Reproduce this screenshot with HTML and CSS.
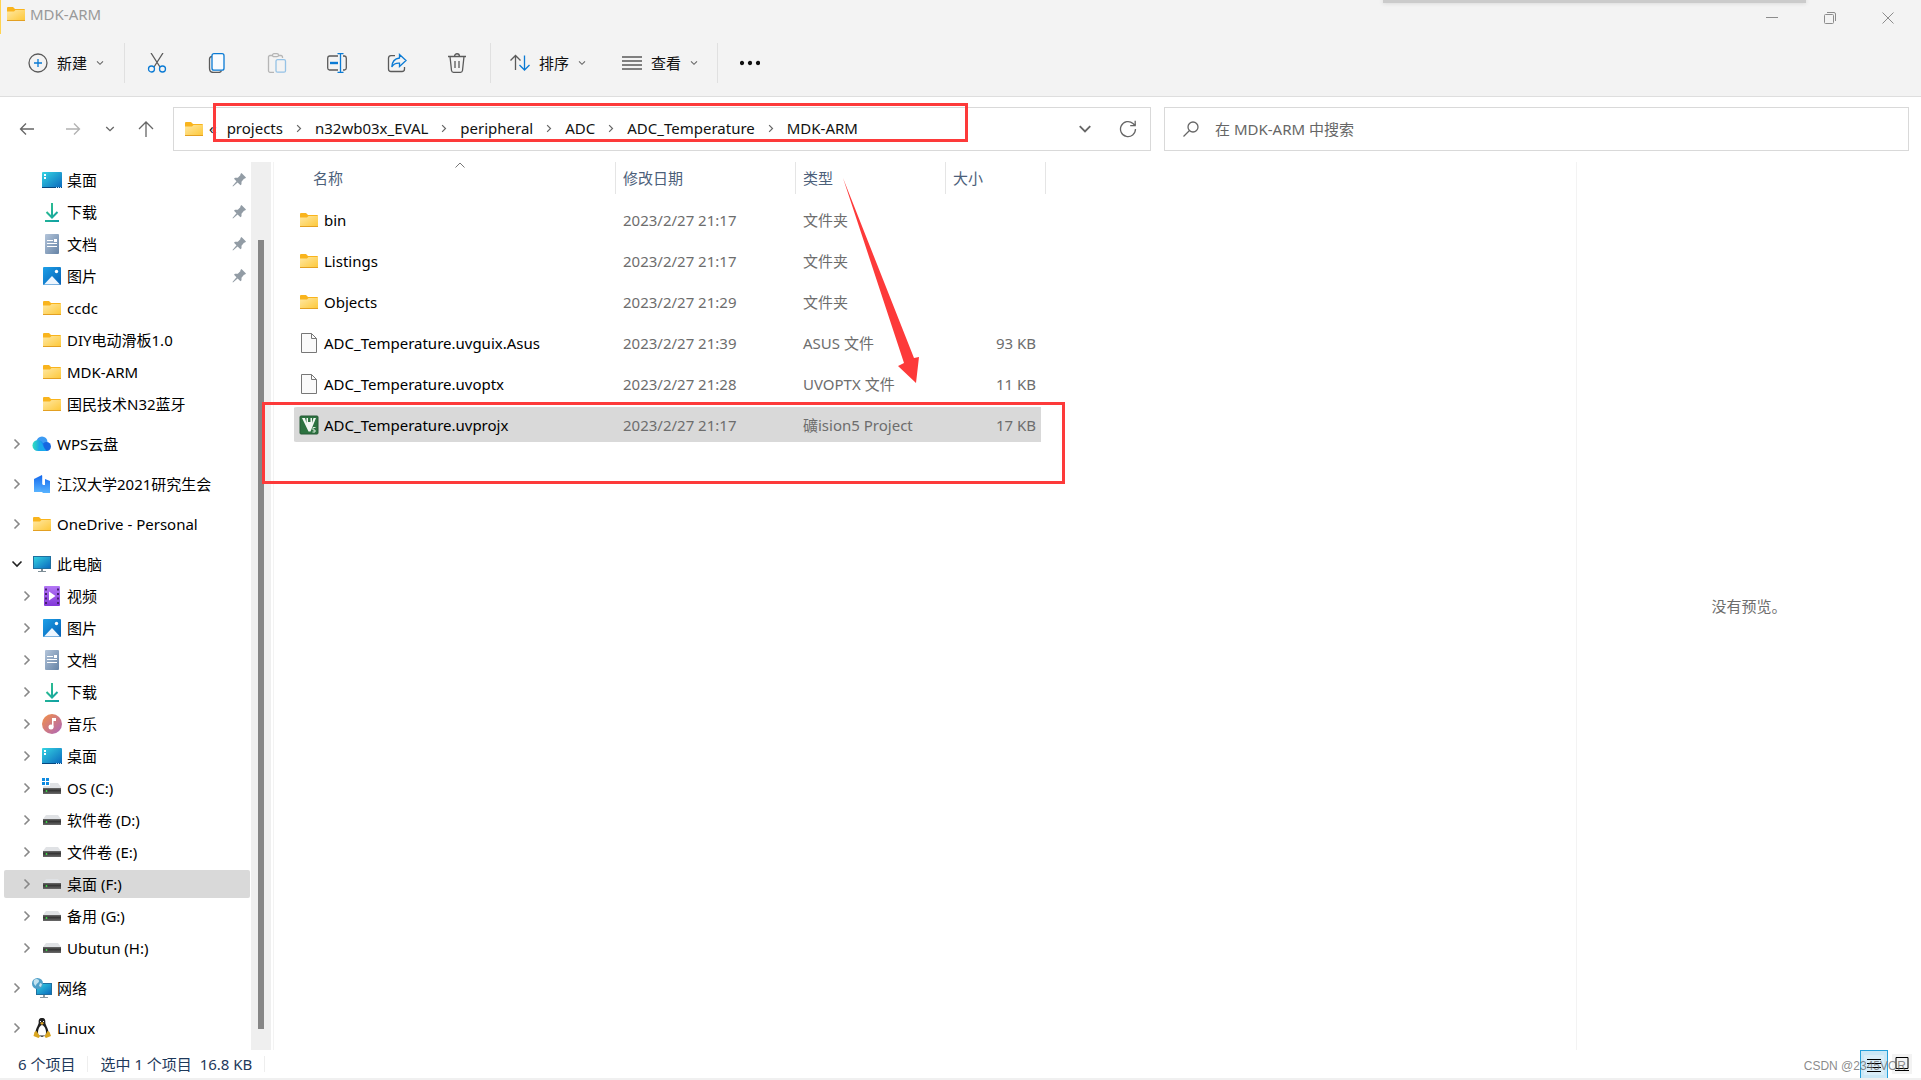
FILE: index.html
```html
<!DOCTYPE html>
<html lang="zh-CN">
  <head>
    <meta charset="UTF-8" />
    <meta name="viewport" content="width=device-width, initial-scale=1.0" />
    <title>MDK-ARM</title>
    <link rel="stylesheet" href="styles.css">
  </head>
  <body>
    <!-- shared icons -->
    <svg class="sprite" aria-hidden="true">
      <defs>
        <linearGradient id="gFolder" x1="0" y1="0" x2="1" y2="1"><stop offset="0" stop-color="#ffe8a3" /><stop offset="1" stop-color="#fdc736" /></linearGradient>
        <linearGradient id="gScreen" x1="0" y1="0" x2="1" y2="1"><stop offset="0" stop-color="#35d4e2" /><stop offset="1" stop-color="#0a67bd" /></linearGradient>
        <linearGradient id="gDown" x1="0" y1="0" x2="1" y2="1"><stop offset="0" stop-color="#35c58b" /><stop offset="1" stop-color="#0f9fa5" /></linearGradient>
        <linearGradient id="gDoc" x1="0" y1="0" x2="1" y2="1"><stop offset="0" stop-color="#b4c5da" /><stop offset="1" stop-color="#6583a6" /></linearGradient>
        <linearGradient id="gPic" x1="0" y1="0" x2="1" y2="1"><stop offset="0" stop-color="#1da0e8" /><stop offset="1" stop-color="#0560b5" /></linearGradient>
        <linearGradient id="gVideo" x1="0" y1="0" x2="0" y2="1"><stop offset="0" stop-color="#b376f5" /><stop offset="1" stop-color="#8237d8" /></linearGradient>
        <linearGradient id="gMusic" x1="0" y1="0" x2="1" y2="1"><stop offset="0" stop-color="#f49144" /><stop offset="1" stop-color="#ac64bd" /></linearGradient>
        <linearGradient id="gCloud" x1="0" y1="0" x2="1" y2="0"><stop offset="0" stop-color="#2fe0c0" /><stop offset="1" stop-color="#1487f5" /></linearGradient>
        <linearGradient id="gTower" x1="0" y1="0" x2="0" y2="1"><stop offset="0" stop-color="#1368ee" /><stop offset="1" stop-color="#58b3ff" /></linearGradient>
        <linearGradient id="gDrive" x1="0" y1="0" x2="0" y2="1"><stop offset="0" stop-color="#6b6b6b" /><stop offset="0.4" stop-color="#353535" /><stop offset="1" stop-color="#6b6b6b" /></linearGradient>
      </defs>
      <symbol id="folder" viewBox="0 0 20 20">
        <path d="M1 4a1 1 0 0 1 1-1h5l2 2h9a1 1 0 0 1 1 1v3H1z" fill="#f9b41d" />
        <path d="M1 7.500h7l1.500-1.500H19v11H1z" fill="url(#gFolder)" />
        <path d="M1 16.500h18" stroke="#e3a022" />
      </symbol>
      <symbol id="desktop" viewBox="0 0 20 20">
        <rect x="0" y="2" width="20" height="16" rx="1" fill="url(#gScreen)" />
        <path d="M0 17h20v1H0z" fill="#06477f" />
        <path d="M2 4h2v2H2zM2 7h2v2H2z" fill="#fff" />
        <path d="M14 17h1v1h-1zM16 17h1v1h-1zM18 17h1v1h-1z" fill="#bfe4ff" />
      </symbol>
      <symbol id="download" viewBox="0 0 20 20">
        <path d="M10 1v14M4.500 10l5.500 5.500L15.500 10M3 19h14" fill="none" stroke="url(#gDown)" stroke-width="2" />
      </symbol>
      <symbol id="document" viewBox="0 0 20 20">
        <rect x="3" y="0" width="14" height="20" rx="1" fill="url(#gDoc)" />
        <path d="M5 6.500h6M5 9.500h10M5 12.500h10" stroke="#fff" />
        <path d="M12 5h3v3h-3z" fill="#fff" />
      </symbol>
      <symbol id="picture" viewBox="0 0 20 20">
        <rect x="1" y="1" width="18" height="18" rx="1" fill="url(#gPic)" />
        <path d="M2 18.500l8-8.500 8 8.500z" fill="#edf6ff" />
        <circle cx="14.500" cy="5.500" r="1.700" fill="#fff" />
      </symbol>
      <symbol id="video" viewBox="0 0 20 20">
        <rect x="2" y="0" width="16" height="20" rx="1" fill="url(#gVideo)" />
        <path d="M4 2.500v16M16 2.500v16" stroke="#472070" stroke-width="2" stroke-dasharray="2 2.500" />
        <path d="M7 5.500l6.500 4.500L7 14.500z" fill="#fff" />
      </symbol>
      <symbol id="music" viewBox="0 0 20 20">
        <circle cx="10" cy="10" r="10" fill="url(#gMusic)" />
        <path d="M10 4h4v3h-2.500v6.500H10z" fill="#fff" />
        <circle cx="9" cy="13" r="2.500" fill="#fff" />
      </symbol>
      <symbol id="drive" viewBox="0 0 20 20">
        <path d="M4 5h12l3 4v2H1V9z" fill="#e0e2e5" />
        <rect x="1" y="9" width="18" height="6" fill="url(#gDrive)" />
        <circle cx="4.500" cy="12" r="0.900" fill="#3fe34a" />
      </symbol>
      <symbol id="windrive" viewBox="0 0 20 20">
        <path d="M4 5h12l3 4v2H1V9z" fill="#e0e2e5" />
        <rect x="1" y="10" width="18" height="6" fill="url(#gDrive)" />
        <circle cx="4.500" cy="13" r="0.900" fill="#3fe34a" />
        <path d="M-1-1h9v9h-9z" fill="#fff" />
        <path d="M0 0h3v3H0zM4 0h3v3H4zM0 4h3v3H0zM4 4h3v3H4z" fill="#0f8ae0" />
      </symbol>
      <symbol id="cloud" viewBox="0 0 20 20">
        <circle cx="10" cy="8" r="5.500" fill="#3c9bf3" />
        <circle cx="14.500" cy="12.500" r="4.500" fill="#1668e0" />
        <path d="M9 17h6V9z" fill="#1668e0" />
        <circle cx="6" cy="11.500" r="5.500" fill="url(#gCloud)" />
        <path d="M8 8c3 1 3 6 7 9H6z" fill="#19a9ec" />
      </symbol>
      <symbol id="tower" viewBox="0 0 20 20">
        <path d="M2 5l8-4v17H2z" fill="url(#gTower)" />
        <path d="M11 1.500v9.500h2V5l5 2v12h-7l-2-2V2z" fill="url(#gTower)" />
        <path d="M10.500 1v9.500M12 11v-9" stroke="#fff" stroke-width="0.800" />
      </symbol>
      <symbol id="pc" viewBox="0 0 20 20">
        <rect x="1.500" y="2.500" width="17" height="12" fill="url(#gScreen)" stroke="#1f6f9f" />
        <path d="M9 15h2v2H9zM6 17h8v1H6z" fill="#7d8d96" />
      </symbol>
      <symbol id="network" viewBox="0 0 20 20">
        <rect x="4.500" y="5.500" width="15" height="11" fill="url(#gScreen)" stroke="#1f6f9f" />
        <path d="M11 17h2v2h-2zM8 19h8v1H8z" fill="#8d9aa2" />
        <circle cx="5.500" cy="5.500" r="5.500" fill="#4f9fc8" />
        <path d="M2 2c2-2 5-1 5 1S4 5 4 8C2 7 1 5 2 2zM8 5l2 1-1 3-2-1z" fill="#c2e2ef" />
      </symbol>
      <symbol id="tux" viewBox="0 0 20 20">
        <path d="M10 0c-3 0-3.500 2-3.300 4.500C6.500 7.500 3 11 3.500 16L10 19l6.500-3C17 11 13.500 7.500 13.300 4.500 13.500 2 13 0 10 0z" fill="#202020" />
        <path d="M10 7c-3 1-5 6-3.500 10.500h7C15 13 13 8 10 7z" fill="#fff" />
        <path d="M8 5l2-1 2 1-2 2z" fill="#e0a520" />
        <path d="M8 3h1v1H8zM11 3h1v1h-1z" fill="#fff" />
        <path d="M2.500 14l2-1L8 18.500 6.500 20 1.500 18zM17.500 14l-2-1L12.500 18.500 14 20l5-2z" fill="#d9a520" />
      </symbol>
      <symbol id="file" viewBox="0 0 20 20">
        <path d="M2.500.5h10l5 5v14h-15z" fill="#fafafa" stroke="#777" />
        <path d="M12.500.5v5h5" fill="none" stroke="#777" />
      </symbol>
      <symbol id="keil" viewBox="0 0 20 20">
        <rect x="1" y="1" width="18" height="18" rx="1" fill="#2c7340" stroke="#265b36" />
        <path d="M3 3h3l1.500 5V3h1.500v4h2.500V3H13v5l1.500-5H17l-5.500 13.500h-2z" fill="#f2f8f3" />
        <path d="M16.500 12.500H14V15h2v2h-2.500" fill="none" stroke="#d8ead9" />
      </symbol>
      <symbol id="pin" viewBox="0 0 14 14">
        <path d="M8.500 1l1-1 4.500 4.500-1 1-1 .2-2.500 3v2.500l-1 1L5.600 9.500 1 13.500.5 13l4-4.700L2 5.800l1-1h2.800l2.500-2.500z" fill="#929ca5" />
      </symbol>
      <symbol id="right" viewBox="0 0 8 12"><path d="M1.500 1.500L6 6l-4.500 4.500" fill="none" stroke="currentColor" stroke-width="1.600" /></symbol>
      <symbol id="down" viewBox="0 0 12 8"><path d="M1.500 1.500L6 6l4.500-4.500" fill="none" stroke="currentColor" stroke-width="1.600" /></symbol>
    </svg>

    <div class="edge"></div>
    <div class="top-shadow"></div>

    <header class="window-head">
      <div class="titlebar">
        <h1><svg class="icon"><use href="#folder" /></svg>MDK-ARM</h1>
        <div class="window-buttons">
          <button aria-label="最小化"><svg width="12" height="12" viewBox="0 0 12 12"><path d="M0 5.500h12" /></svg></button>
          <button aria-label="还原"><svg width="12" height="12" viewBox="0 0 12 12"><rect x="0.500" y="2.500" width="9" height="9" rx="1" /><path d="M3 .5h7a1.500 1.500 0 0 1 1.500 1.500v7" /></svg></button>
          <button aria-label="关闭"><svg width="12" height="12" viewBox="0 0 12 12"><path d="M.5.5l11 11M11.500.5l-11 11" /></svg></button>
        </div>
      </div>
      <div class="toolbar">
        <button class="tool-text tool-new">
          <svg width="20" height="20" viewBox="0 0 20 20"><circle cx="10" cy="10" r="9" /><path class="blue" d="M10 6v8M6 10h8" /></svg>
          新建
          <svg class="arrow"><use href="#down" /></svg>
        </button>
        <span class="divider"></span>
        <button class="tool" aria-label="剪切"><svg width="20" height="20" viewBox="0 0 20 20"><path d="M4 0l9 14M16 0L7 14" /><circle class="blue" cx="4.500" cy="16" r="3" /><circle class="blue" cx="15.500" cy="16" r="3" /></svg></button>
        <button class="tool" aria-label="复制"><svg width="20" height="20" viewBox="0 0 20 20"><path d="M5 3.500c-1.500 0-2.500 1-2.500 2.500v9c0 3 1.500 4.500 4 4.500h5c1.500 0 2.500-.5 3-2" /><rect class="blue" x="5" y="0.700" width="12" height="16.500" rx="2" fill="#f9fcff" /></svg></button>
        <button class="tool" aria-label="粘贴" disabled><svg width="20" height="20" viewBox="0 0 20 20"><path d="M7 19.300H3a1.500 1.500 0 0 1-1.500-1.500V4A1.500 1.500 0 0 1 3 2.500h2.500M11.500 2.500H14A1.500 1.500 0 0 1 15.500 4v1" /><rect x="5.500" y="0.700" width="6" height="3" rx="1.500" /><rect class="blue" x="9" y="6.700" width="9.500" height="12.500" rx="1.500" /></svg></button>
        <button class="tool" aria-label="重命名"><svg width="20" height="20" viewBox="0 0 20 20"><path d="M11 17H2.500A2 2 0 0 1 .7 15V5A2 2 0 0 1 2.500 3H11M16 3h1.500a2 2 0 0 1 1.800 2v10a2 2 0 0 1-1.800 2H16" /><path class="blue" d="M10.500.7h6M10.500 19.300h6M13.500 1v18" /><path class="blue thick" d="M3 10h8" /></svg></button>
        <button class="tool" aria-label="共享"><svg width="20" height="20" viewBox="0 0 20 20"><path d="M8 2.700H4A2.500 2.500 0 0 0 1.500 5v11A2.500 2.500 0 0 0 4 18.500h11a2.500 2.500 0 0 0 2.500-2.500v-2" /><path class="blue" d="M12.500 1.500L19 7.500l-6.500 6v-3.300C9 10 6.500 11 4.800 14c.3-5 3-8.500 7.700-9z" /></svg></button>
        <button class="tool" aria-label="删除"><svg width="20" height="20" viewBox="0 0 20 20"><path d="M1 3.500h18M3 3.500l1.500 14c.2 1.200.8 1.800 2 1.800h7c1.200 0 1.800-.6 2-1.800L17 3.500M7.500 3.500C7.500-.2 12.500-.2 12.500 3.500M8 8v7M12 8v7" /></svg></button>
        <span class="divider"></span>
        <button class="tool-text">
          <svg width="20" height="20" viewBox="0 0 20 20"><path d="M5.500 17V2.500M.5 7.500l5-5 5 5" /><path class="blue" d="M14.500 2.500V17M9.500 12l5 5 5-5" /></svg>
          排序
          <svg class="arrow"><use href="#down" /></svg>
        </button>
        <button class="tool-text">
          <svg width="20" height="20" viewBox="0 0 20 20"><path d="M0 4h20M0 8h20M0 12h20M0 16h20" /></svg>
          查看
          <svg class="arrow"><use href="#down" /></svg>
        </button>
        <span class="divider"></span>
        <button class="tool tool-more" aria-label="更多"><svg width="20" height="20" viewBox="0 0 20 20"><circle cx="2" cy="10" r="1.500" /><circle cx="10" cy="10" r="1.500" /><circle cx="18" cy="10" r="1.500" /></svg></button>
      </div>
    </header>

    <div class="navbar">
      <div class="nav-buttons">
        <button aria-label="后退"><svg width="16" height="16" viewBox="0 0 16 16"><path d="M15 8H1.500M7 2.500L1.500 8 7 13.500" /></svg></button>
        <button aria-label="前进" disabled><svg width="16" height="16" viewBox="0 0 16 16"><path d="M1 8h13.500M9 2.500L14.500 8 9 13.500" /></svg></button>
        <button class="narrow" aria-label="最近浏览的位置"><svg class="arrow"><use href="#down" /></svg></button>
        <button aria-label="向上"><svg width="16" height="16" viewBox="0 0 16 16"><path d="M8 16V1M1 8l7-7 7 7" /></svg></button>
      </div>
      <div class="address">
        <svg class="icon"><use href="#folder" /></svg>
        <nav class="crumbs">
          <span class="more">«</span>
          <a href="#">projects</a><svg class="sep"><use href="#right" /></svg>
          <a href="#">n32wb03x_EVAL</a><svg class="sep"><use href="#right" /></svg>
          <a href="#">peripheral</a><svg class="sep"><use href="#right" /></svg>
          <a href="#">ADC</a><svg class="sep"><use href="#right" /></svg>
          <a href="#">ADC_Temperature</a><svg class="sep"><use href="#right" /></svg>
          <a href="#">MDK-ARM</a>
        </nav>
        <button aria-label="上一个位置"><svg width="14" height="10"><use href="#down" /></svg></button>
        <button aria-label="刷新"><svg width="18" height="18" viewBox="0 0 18 18"><path d="M16.500 9a7.500 7.500 0 1 1-2.500-5.500l2 2M16.200.8v4.900h-5" /></svg></button>
      </div>
      <label class="search">
        <svg width="16" height="16" viewBox="0 0 16 16"><circle cx="10" cy="6" r="5" /><path d="M6.500 9.500L.5 15.500" /></svg>
        <input type="text" placeholder="在 MDK-ARM 中搜索" aria-label="在 MDK-ARM 中搜索">
      </label>
    </div>

    <main class="content">
      <nav class="sidebar">
        <ul class="tree">
          <li>
            <ul>
              <li><a href="#"><i></i><svg class="icon"><use href="#desktop" /></svg>桌面<svg class="pin"><use href="#pin" /></svg></a></li>
              <li><a href="#"><i></i><svg class="icon"><use href="#download" /></svg>下载<svg class="pin"><use href="#pin" /></svg></a></li>
              <li><a href="#"><i></i><svg class="icon"><use href="#document" /></svg>文档<svg class="pin"><use href="#pin" /></svg></a></li>
              <li><a href="#"><i></i><svg class="icon"><use href="#picture" /></svg>图片<svg class="pin"><use href="#pin" /></svg></a></li>
              <li><a href="#"><i></i><svg class="icon"><use href="#folder" /></svg>ccdc</a></li>
              <li><a href="#"><i></i><svg class="icon"><use href="#folder" /></svg>DIY电动滑板1.0</a></li>
              <li><a href="#"><i></i><svg class="icon"><use href="#folder" /></svg>MDK-ARM</a></li>
              <li><a href="#"><i></i><svg class="icon"><use href="#folder" /></svg>国民技术N32蓝牙</a></li>
            </ul>
          </li>
          <li><a href="#"><i><svg><use href="#right" /></svg></i><svg class="icon"><use href="#cloud" /></svg>WPS云盘</a></li>
          <li><a href="#"><i><svg><use href="#right" /></svg></i><svg class="icon"><use href="#tower" /></svg>江汉大学2021研究生会</a></li>
          <li><a href="#"><i><svg><use href="#right" /></svg></i><svg class="icon"><use href="#folder" /></svg>OneDrive - Personal</a></li>
          <li>
            <a href="#"><i class="open"><svg><use href="#down" /></svg></i><svg class="icon"><use href="#pc" /></svg>此电脑</a>
            <ul>
              <li><a href="#"><i><svg><use href="#right" /></svg></i><svg class="icon"><use href="#video" /></svg>视频</a></li>
              <li><a href="#"><i><svg><use href="#right" /></svg></i><svg class="icon"><use href="#picture" /></svg>图片</a></li>
              <li><a href="#"><i><svg><use href="#right" /></svg></i><svg class="icon"><use href="#document" /></svg>文档</a></li>
              <li><a href="#"><i><svg><use href="#right" /></svg></i><svg class="icon"><use href="#download" /></svg>下载</a></li>
              <li><a href="#"><i><svg><use href="#right" /></svg></i><svg class="icon"><use href="#music" /></svg>音乐</a></li>
              <li><a href="#"><i><svg><use href="#right" /></svg></i><svg class="icon"><use href="#desktop" /></svg>桌面</a></li>
              <li><a href="#"><i><svg><use href="#right" /></svg></i><svg class="icon"><use href="#windrive" /></svg>OS (C:)</a></li>
              <li><a href="#"><i><svg><use href="#right" /></svg></i><svg class="icon"><use href="#drive" /></svg>软件卷 (D:)</a></li>
              <li><a href="#"><i><svg><use href="#right" /></svg></i><svg class="icon"><use href="#drive" /></svg>文件卷 (E:)</a></li>
              <li><a href="#" class="current"><i><svg><use href="#right" /></svg></i><svg class="icon"><use href="#drive" /></svg>桌面 (F:)</a></li>
              <li><a href="#"><i><svg><use href="#right" /></svg></i><svg class="icon"><use href="#drive" /></svg>备用 (G:)</a></li>
              <li><a href="#"><i><svg><use href="#right" /></svg></i><svg class="icon"><use href="#drive" /></svg>Ubutun (H:)</a></li>
            </ul>
          </li>
          <li><a href="#"><i><svg><use href="#right" /></svg></i><svg class="icon"><use href="#network" /></svg>网络</a></li>
          <li><a href="#"><i><svg><use href="#right" /></svg></i><svg class="icon"><use href="#tux" /></svg>Linux</a></li>
        </ul>
        <div class="scrollbar"><div class="thumb"></div></div>
      </nav>

      <section class="files">
        <table>
          <thead>
            <tr>
              <th class="name"><span>名称</span><svg class="sorted" viewBox="0 0 10 6"><path d="M.5 5.500L5 1l4.500 4.500" /></svg></th>
              <th class="date"><span>修改日期</span></th>
              <th class="type"><span>类型</span></th>
              <th class="size"><span>大小</span></th>
            </tr>
          </thead>
          <tbody>
            <tr><td><div><svg class="icon"><use href="#folder" /></svg>bin</div></td><td>2023/2/27 21:17</td><td>文件夹</td><td></td></tr>
            <tr><td><div><svg class="icon"><use href="#folder" /></svg>Listings</div></td><td>2023/2/27 21:17</td><td>文件夹</td><td></td></tr>
            <tr><td><div><svg class="icon"><use href="#folder" /></svg>Objects</div></td><td>2023/2/27 21:29</td><td>文件夹</td><td></td></tr>
            <tr><td><div><svg class="icon"><use href="#file" /></svg>ADC_Temperature.uvguix.Asus</div></td><td>2023/2/27 21:39</td><td>ASUS 文件</td><td>93 KB</td></tr>
            <tr><td><div><svg class="icon"><use href="#file" /></svg>ADC_Temperature.uvoptx</div></td><td>2023/2/27 21:28</td><td>UVOPTX 文件</td><td>11 KB</td></tr>
            <tr class="selected"><td><div><svg class="icon"><use href="#keil" /></svg>ADC_Temperature.uvprojx</div></td><td>2023/2/27 21:17</td><td>礦ision5 Project</td><td>17 KB</td></tr>
          </tbody>
        </table>
      </section>

      <aside class="preview">没有预览。</aside>
    </main>

    <footer class="statusbar">
      <span class="count">6 个项目</span>
      <span class="picked">选中 1 个项目&nbsp; 16.8 KB</span>
      <div class="view-buttons">
        <button class="active" aria-label="详细信息"><svg width="20" height="20" viewBox="0 0 20 20"><path d="M3 4.500h14M3 8.500h14M3 12.500h14M3 16.500h14" /></svg></button>
        <button aria-label="大图标"><svg width="20" height="20" viewBox="0 0 20 20"><path d="M4 3.500h12v11H4zM3 16.500h14" /></svg></button>
      </div>
    </footer>

    <!-- annotations -->
    <div class="mark mark-path"></div>
    <div class="mark mark-file"></div>
    <svg class="mark-arrow" width="80" height="208" viewBox="0 0 80 208"><path d="M1 0l71 180 5-1-3 26-18-17 6-3z" /></svg>
    <span class="watermark">CSDN @2345VOR</span>
  </body>
</html>
```
FILE: styles.css
```css
* {
  box-sizing: border-box;
}
body {
  margin: 0;
  height: 100vh;
  display: flex;
  flex-direction: column;
  position: relative;
  overflow: hidden;
  background: #fff;
  color: #111;
  font-family: "Noto Sans", "Noto Sans CJK SC", sans-serif;
  font-size: 15px;
  line-height: 20px;
}
ul {
  list-style: none;
  margin: 0;
  padding: 0;
}
a {
  color: inherit;
  text-decoration: none;
}
button {
  display: flex;
  align-items: center;
  justify-content: center;
  padding: 0;
  border: none;
  background: none;
  color: inherit;
  font: inherit;
}
svg {
  flex: none;
}
.sprite {
  position: absolute;
  width: 0;
  height: 0;
}
.icon {
  width: 20px;
  height: 20px;
}
.arrow {
  width: 8px;
  height: 6px;
  color: #666;
}

/* slice of the window behind and shadow of the bar above */
.edge {
  position: absolute;
  left: 0;
  top: 0;
  width: 1px;
  height: 34px;
  background: #ffd34f;
  z-index: 1;
}
.top-shadow {
  position: absolute;
  top: 0;
  left: 72%;
  right: 115px;
  height: 3px;
  background: #cbcbcb;
  box-shadow: 0 0 4px #ccc;
}

.window-head {
  background: #f3f3f3;
  border-bottom: 1px solid #dedede;
}
.titlebar {
  display: flex;
  justify-content: space-between;
  height: 30px;
}
.titlebar h1 {
  display: flex;
  align-items: center;
  gap: 4px;
  margin: 0;
  padding: 0 0 2px 6px;
  font-size: 15px;
  font-weight: normal;
  color: #999;
}
.window-buttons {
  display: flex;
  padding-right: 4px;
}
.window-buttons button {
  width: 58px;
  height: 36px;
}
.window-buttons svg {
  fill: none;
  stroke: #8c8c8c;
}
.toolbar {
  display: flex;
  align-items: center;
  height: 66px;
  padding-left: 9px;
}
.toolbar svg {
  fill: none;
  stroke: #5a5a5a;
  stroke-width: 1.3;
}
.toolbar .blue {
  stroke: #0a7ad4;
}
.toolbar .thick {
  stroke-width: 2.4;
}
.toolbar button:disabled {
  opacity: 0.4;
}
.tool-text {
  gap: 9px;
  padding: 0 19px;
}
.tool-text + .tool-text {
  padding-left: 17px;
}
.tool-new {
  padding-right: 20px;
}
.divider {
  width: 1px;
  height: 40px;
  background: #e0e0e0;
}
.tool {
  width: 60px;
  height: 40px;
}
.toolbar .tool-more svg {
  fill: #111;
  stroke: #111;
}
.divider + .tool {
  margin-left: 2px;
}
.tool + .divider {
  margin-left: 3px;
}

.navbar {
  display: flex;
  gap: 5px;
  padding: 10px 12px 11px 4px;
}
.nav-buttons {
  display: flex;
  align-items: center;
}
.nav-buttons button {
  width: 46px;
  height: 32px;
}
.nav-buttons .narrow {
  width: 28px;
}
.nav-buttons button:last-child {
  width: 44px;
}
.nav-buttons svg,
.address button svg,
.search svg {
  fill: none;
  stroke: #666;
  stroke-width: 1.3;
}
.nav-buttons button:disabled {
  opacity: 0.5;
}
.nav-buttons .arrow {
  width: 10px;
  height: 8px;
}
.address,
.search {
  display: flex;
  align-items: center;
  height: 44px;
  border: 1px solid #d9d9d9;
}
.address {
  flex: 965;
  padding: 0 1px 0 10px;
}
.search {
  flex: 707;
  gap: 16px;
  margin-left: 8px;
  padding: 0 18px;
}
.search input {
  flex: 1;
  padding: 0;
  border: none;
  outline: none;
  font: inherit;
}
.search input::placeholder {
  color: #666;
}
.crumbs {
  display: flex;
  align-items: center;
  flex: 1;
  gap: 13px;
  padding: 0 0 2px 5px;
}
.more {
  margin-right: -3px;
}
.sep {
  width: 6px;
  height: 9px;
  color: #666;
}
.address button {
  width: 43px;
  height: 32px;
  color: #666;
}

.content {
  flex: 1;
  display: flex;
  min-height: 0;
}
.sidebar {
  flex: 0 0 274px;
  display: flex;
  padding-right: 2px;
  border-right: 1px solid #f3f3f3;
}
.tree {
  flex: 1;
  padding: 2px 1px 0 4px;
}
.tree > li + li {
  padding-top: 6px;
}
.tree a {
  display: flex;
  align-items: center;
  height: 28px;
  margin: 2px 0 4px;
  border-radius: 2px;
  color: #000;
}
.tree ul a {
  padding-left: 10px;
}
.tree .current {
  background: #d9d9d9;
}
.tree i {
  display: flex;
  justify-content: center;
  width: 12px;
  margin: 0 9px 0 7px;
}
.tree i svg {
  width: 8px;
  height: 12px;
  color: #888;
}
.tree .open svg {
  width: 12px;
  height: 8px;
  color: #222;
}
.tree .icon {
  margin-right: 5px;
}
.pin {
  width: 14px;
  height: 14px;
  margin-left: auto;
  margin-right: 4px;
}
.scrollbar {
  width: 20px;
  padding: 78px 7px 21px;
  background: #efefef;
}
.thumb {
  height: 100%;
  background: #868686;
}

.files {
  flex: 1;
  padding-left: 20px;
}
table {
  table-layout: fixed;
  width: 752px;
  border-spacing: 0;
}
th {
  position: relative;
  padding: 0 0 5px;
  color: #4c607a;
  font-weight: normal;
  text-align: left;
}
th span {
  display: flex;
  align-items: center;
  height: 32px;
  padding-left: 7px;
  border-right: 1px solid #e5e5e5;
}
.name {
  width: 322px;
}
.name span {
  padding-left: 19px;
}
.date {
  width: 180px;
}
.type {
  width: 150px;
}
.size {
  width: 100px;
}
.sorted {
  position: absolute;
  top: 0;
  left: 50%;
  width: 10px;
  height: 6px;
  fill: none;
  stroke: #777;
}
td {
  height: 41px;
  padding: 0 0 0 7px;
  border: solid transparent;
  border-width: 3px 0;
  background-clip: padding-box;
  color: #6d6d6d;
}
td:first-child {
  padding-left: 5px;
  border-radius: 4px 0 0 4px;
  color: #000;
}
td:last-child {
  padding-right: 5px;
  border-right: 5px solid transparent;
  text-align: right;
}
td div {
  display: flex;
  align-items: center;
  gap: 5px;
}
.selected td {
  background-color: #d9d9d9;
}

.preview {
  flex: 0 0 345px;
  display: flex;
  align-items: center;
  justify-content: center;
  border-left: 1px solid #f3f3f3;
  color: #6d6d6d;
}

.statusbar {
  display: flex;
  align-items: center;
  height: 30px;
  padding-left: 18px;
  border-bottom: 2px solid #f0f0f0;
  color: #1e395b;
}
.statusbar span {
  line-height: 16px;
  padding-right: 12px;
  border-right: 1px solid #eee;
}
.picked {
  padding-left: 12px;
}
.view-buttons {
  display: flex;
  gap: 4px;
  margin-left: auto;
  padding-right: 9px;
}
.view-buttons button {
  width: 20px;
  height: 28px;
}
.view-buttons .active {
  width: 28px;
  border: 1px solid #26a0da;
  border-bottom: none;
  background: #cbe8f6;
}
.view-buttons svg {
  fill: none;
  stroke: #000;
  background: #f3f3f3;
}
.view-buttons .active svg {
  background: #daeef8;
}

.mark {
  position: absolute;
  border: 3px solid #fd3a3a;
}
.mark-path {
  left: 213px;
  top: 103px;
  width: 755px;
  height: 39px;
}
.mark-file {
  left: 262px;
  top: 402px;
  width: 803px;
  height: 82px;
}
.mark-arrow {
  position: absolute;
  left: 842px;
  top: 178px;
  fill: #fd3a3a;
}
.watermark {
  position: absolute;
  right: 15px;
  bottom: 4px;
  color: rgba(100, 100, 100, 0.75);
  font-family: "Liberation Sans", Arial, sans-serif;
  font-size: 12px;
}
```
